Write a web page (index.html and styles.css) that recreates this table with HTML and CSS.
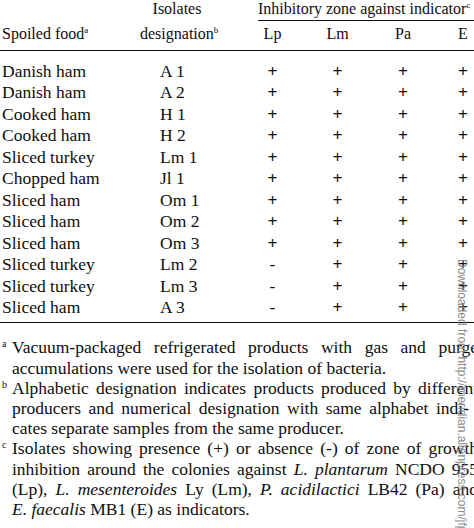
FILE: index.html
```html
<!DOCTYPE html>
<html lang="en">
<head>
<meta charset="utf-8">
<title>Isolates table</title>
<link rel="stylesheet" href="styles.css">
</head>
<body>
<div class="page">
  <div class="thead">
    <div class="h-iso r1">Isolates</div>
    <div class="h-title">Inhibitory zone against indicator<sup class="hs">c</sup></div>
    <div class="h-food">Spoiled food<sup class="hs">a</sup></div>
    <div class="h-iso r2">designation<sup class="hs">b</sup></div>
    <div class="h-ind">Lp</div>
    <div class="h-ind">Lm</div>
    <div class="h-ind">Pa</div>
    <div class="h-ind">E</div>
  </div>
  <div class="tbody">
    <div class="c-food">Danish ham</div><div class="c-iso">A 1</div><div class="c-r">+</div><div class="c-r">+</div><div class="c-r">+</div><div class="c-r">+</div>
    <div class="c-food">Danish ham</div><div class="c-iso">A 2</div><div class="c-r">+</div><div class="c-r">+</div><div class="c-r">+</div><div class="c-r">+</div>
    <div class="c-food">Cooked ham</div><div class="c-iso">H 1</div><div class="c-r">+</div><div class="c-r">+</div><div class="c-r">+</div><div class="c-r">+</div>
    <div class="c-food">Cooked ham</div><div class="c-iso">H 2</div><div class="c-r">+</div><div class="c-r">+</div><div class="c-r">+</div><div class="c-r">+</div>
    <div class="c-food">Sliced turkey</div><div class="c-iso">Lm 1</div><div class="c-r">+</div><div class="c-r">+</div><div class="c-r">+</div><div class="c-r">+</div>
    <div class="c-food">Chopped ham</div><div class="c-iso">Jl 1</div><div class="c-r">+</div><div class="c-r">+</div><div class="c-r">+</div><div class="c-r">+</div>
    <div class="c-food">Sliced ham</div><div class="c-iso">Om 1</div><div class="c-r">+</div><div class="c-r">+</div><div class="c-r">+</div><div class="c-r">+</div>
    <div class="c-food">Sliced ham</div><div class="c-iso">Om 2</div><div class="c-r">+</div><div class="c-r">+</div><div class="c-r">+</div><div class="c-r">+</div>
    <div class="c-food">Sliced ham</div><div class="c-iso">Om 3</div><div class="c-r">+</div><div class="c-r">+</div><div class="c-r">+</div><div class="c-r">+</div>
    <div class="c-food">Sliced turkey</div><div class="c-iso">Lm 2</div><div class="c-r neg">-</div><div class="c-r">+</div><div class="c-r">+</div><div class="c-r">+</div>
    <div class="c-food">Sliced turkey</div><div class="c-iso">Lm 3</div><div class="c-r neg">-</div><div class="c-r">+</div><div class="c-r">+</div><div class="c-r">+</div>
    <div class="c-food">Sliced ham</div><div class="c-iso">A 3</div><div class="c-r neg">-</div><div class="c-r">+</div><div class="c-r">+</div><div class="c-r">+</div>
  </div>
  <div class="notes">
    <div class="fn">
      <sup class="mk">a</sup>
      <div class="fn-body">
        <span class="jl">Vacuum-packaged refrigerated products with gas and purge</span>
        <span class="ll">accumulations were used for the isolation of bacteria.</span>
      </div>
    </div>
    <div class="fn">
      <sup class="mk">b</sup>
      <div class="fn-body">
        <span class="jl">Alphabetic designation indicates products produced by different</span>
        <span class="jl short">producers and numerical designation with same alphabet indi-</span>
        <span class="ll">cates separate samples from the same producer.</span>
      </div>
    </div>
    <div class="fn">
      <sup class="mk">c</sup>
      <div class="fn-body">
        <span class="jl">Isolates showing presence (+) or absence (-) of zone of growth</span>
        <span class="jl">inhibition around the colonies against <i>L. plantarum</i> NCDO 955</span>
        <span class="jl">(Lp), <i>L. mesenteroides</i> Ly (Lm), <i>P. acidilactici</i> LB42 (Pa) and</span>
        <span class="ll"><i>E. faecalis</i> MB1 (E) as indicators.</span>
      </div>
    </div>
  </div>
  <div class="watermark">Downloaded from http://meridian.allenpress.com/jfp/article-pdf</div>
</div>
</body>
</html>
```

FILE: styles.css
```css
html, body {
  margin: 0;
  padding: 0;
  overflow: hidden;
  background: #ffffff;
}

.page {
  position: relative;
  width: 490px;
  height: 528px;
  overflow: hidden;
  color: #0e0e0e;
  font-family: "Liberation Serif", "Times New Roman", serif;
  font-size: 17.5px;
}

.thead {
  display: grid;
  grid-template-columns: 140px 100px 65px 65px 66px 54px;
  font-size: 16px;
  line-height: 17px;
  padding-bottom: 8px;
  border-bottom: 1.5px solid #0e0e0e;
}

.hs {
  font-size: 9px;
  line-height: 0;
  vertical-align: 6px;
}

.h-iso {
  grid-column: 2;
  text-align: center;
  padding-right: 26px;
}

.h-iso.r1 {
  grid-row: 1;
}

.h-iso.r2 {
  grid-row: 2;
  padding-top: 4px;
}

.h-title {
  grid-column: 3 / -1;
  grid-row: 1;
  margin-left: 18px;
  padding-bottom: 3px;
  border-bottom: 1px solid #0e0e0e;
  white-space: nowrap;
}

.h-food {
  grid-column: 1;
  grid-row: 2;
  padding-left: 2px;
  padding-top: 4px;
}

.h-ind {
  grid-row: 2;
  text-align: center;
  padding-top: 4px;
}

.tbody {
  display: grid;
  grid-template-columns: 140px 100px 65px 65px 66px 54px;
  line-height: 21.45px;
  padding-top: 10px;
  padding-bottom: 4px;
  border-bottom: 1.5px solid #0e0e0e;
}

.c-food {
  padding-left: 2px;
  white-space: nowrap;
}

.c-iso {
  padding-left: 20px;
  white-space: nowrap;
}

.c-r {
  text-align: center;
  font-weight: bold;
}

.c-r.neg {
  font-weight: normal;
}

.notes {
  width: 478px;
  padding-top: 14px;
  line-height: 20.2px;
}

.fn {
  display: flex;
  align-items: flex-start;
}

.mk {
  flex: 0 0 10px;
  padding-left: 2px;
  font-size: 10px;
  line-height: 14px;
  vertical-align: top;
}

.fn-body {
  flex: 1 1 auto;
  min-width: 0;
}

.jl {
  display: block;
  white-space: nowrap;
  text-align: justify;
  text-align-last: justify;
}

.jl.short {
  margin-right: 9px;
}

.ll {
  display: block;
  white-space: nowrap;
}

.watermark {
  position: absolute;
  left: 456px;
  top: 259px;
  writing-mode: vertical-rl;
  font-family: "Liberation Sans", Arial, sans-serif;
  font-size: 12px;
  line-height: 12px;
  color: #8a8a8a;
  white-space: nowrap;
}
```
